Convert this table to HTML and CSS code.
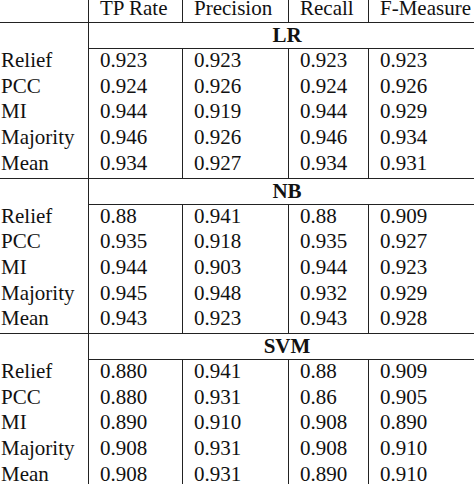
FILE: index.html
```html
<!DOCTYPE html>
<html>
<head>
<meta charset="utf-8">
<link rel="stylesheet" href="styles.css">
</head>
<body>
<div class="table">
  <div class="c hd first"></div>
  <div class="c hd">TP Rate</div>
  <div class="c hd">Precision</div>
  <div class="c hd">Recall</div>
  <div class="c hd">F-Measure</div>

  <div class="c sec-empty"></div>
  <div class="c sec">LR</div>

  <div class="c lbl">Relief</div><div class="c">0.923</div><div class="c">0.923</div><div class="c">0.923</div><div class="c">0.923</div>
  <div class="c lbl">PCC</div><div class="c">0.924</div><div class="c">0.926</div><div class="c">0.924</div><div class="c">0.926</div>
  <div class="c lbl">MI</div><div class="c">0.944</div><div class="c">0.919</div><div class="c">0.944</div><div class="c">0.929</div>
  <div class="c lbl">Majority</div><div class="c">0.946</div><div class="c">0.926</div><div class="c">0.946</div><div class="c">0.934</div>
  <div class="c lbl last">Mean</div><div class="c last">0.934</div><div class="c last">0.927</div><div class="c last">0.934</div><div class="c last">0.931</div>

  <div class="c sec-empty"></div>
  <div class="c sec">NB</div>

  <div class="c lbl">Relief</div><div class="c">0.88</div><div class="c">0.941</div><div class="c">0.88</div><div class="c">0.909</div>
  <div class="c lbl">PCC</div><div class="c">0.935</div><div class="c">0.918</div><div class="c">0.935</div><div class="c">0.927</div>
  <div class="c lbl">MI</div><div class="c">0.944</div><div class="c">0.903</div><div class="c">0.944</div><div class="c">0.923</div>
  <div class="c lbl">Majority</div><div class="c">0.945</div><div class="c">0.948</div><div class="c">0.932</div><div class="c">0.929</div>
  <div class="c lbl last">Mean</div><div class="c last">0.943</div><div class="c last">0.923</div><div class="c last">0.943</div><div class="c last">0.928</div>

  <div class="c sec-empty"></div>
  <div class="c sec">SVM</div>

  <div class="c lbl">Relief</div><div class="c">0.880</div><div class="c">0.941</div><div class="c">0.88</div><div class="c">0.909</div>
  <div class="c lbl">PCC</div><div class="c">0.880</div><div class="c">0.931</div><div class="c">0.86</div><div class="c">0.905</div>
  <div class="c lbl">MI</div><div class="c">0.890</div><div class="c">0.910</div><div class="c">0.908</div><div class="c">0.890</div>
  <div class="c lbl">Majority</div><div class="c">0.908</div><div class="c">0.931</div><div class="c">0.908</div><div class="c">0.910</div>
  <div class="c lbl last">Mean</div><div class="c last">0.908</div><div class="c last">0.931</div><div class="c last">0.890</div><div class="c last">0.910</div>
</div>
</body>
</html>
```

FILE: styles.css
```css
html, body {
  margin: 0;
  padding: 0;
  overflow: hidden;
  background: #fff;
}
body {
  width: 474px;
  height: 484px;
}
.table {
  display: grid;
  grid-template-columns: 88px 94px 106px 80px 117px;
  width: 485px;
  font-family: "Liberation Serif", "Times New Roman", serif;
  font-size: 21px;
  color: #111;
}
.c {
  border-left: 1px solid #222;
  padding: 0 0 2px 11px;
  line-height: 23.7px;
  white-space: nowrap;
}
.c.lbl, .c.sec-empty, .c.first {
  border-left: none;
  padding-left: 1px;
}
.c.hd {
  line-height: 16px;
  padding-bottom: 6px;
  border-bottom: 1px solid #222;
}
.c.sec {
  grid-column: 2 / 6;
  text-align: center;
  font-weight: bold;
  line-height: 25px;
  padding: 0;
  border-bottom: 1px solid #222;
}
.c.sec-empty {
  height: 25px;
  padding: 0;
}
.c.last {
  border-bottom: 1px solid #222;
}
```
